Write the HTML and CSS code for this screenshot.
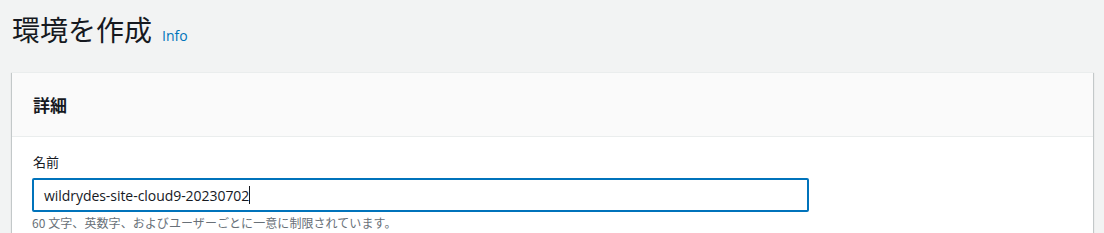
FILE: index.html
```html
<!DOCTYPE html>
<html lang="ja">
<head>
<meta charset="utf-8">
<link rel="stylesheet" href="styles.css">
</head>
<body>
<div class="page">
  <div class="title-row">
    <h1 class="title">環境を作成</h1>
    <a class="info">Info</a>
  </div>
  <div class="card">
    <div class="card-header">
      <h2 class="card-title">詳細</h2>
    </div>
    <div class="card-body">
      <label class="label">名前</label>
      <div class="input">wildrydes-site-cloud9-20230702<span class="caret"></span></div>
      <div class="hint">60 文字、英数字、およびユーザーごとに一意に制限されています。</div>
    </div>
  </div>
</div>
</body>
</html>
```

FILE: styles.css
```css
html, body {
  margin: 0;
  padding: 0;
  background: #f2f3f3;
  font-family: "Noto Sans", "Noto Sans CJK JP", sans-serif;
  color: #16191f;
  overflow: hidden;
}
.page {
  padding: 11px 10px 0 12px;
}
.title-row {
  display: flex;
  align-items: baseline;
  gap: 10px;
  height: 49px;
}
.title {
  margin: 0;
  font-family: "Noto Sans CJK JP", sans-serif;
  font-size: 28px;
  font-weight: 400;
  line-height: 36px;
}
.info {
  font-family: "Open Sans", "Noto Sans", sans-serif;
  font-size: 14px;
  color: #0073bb;
}
.card {
  margin-top: 12px;
  width: 1081px;
  background: #ffffff;
  border-top: 1px solid #eaeded;
  box-shadow: 0 1px 1px 0 rgba(0, 28, 36, 0.3), 1px 1px 1px 0 rgba(0, 28, 36, 0.15), -1px 1px 1px 0 rgba(0, 28, 36, 0.15);
}
.card-header {
  background: #fafafa;
  border-bottom: 1px solid #eaeded;
  height: 63px;
  display: flex;
  align-items: center;
  padding-left: 21px;
}
.card-title {
  margin: 0;
  font-family: "Noto Sans CJK JP", sans-serif;
  font-size: 17px;
  font-weight: 700;
}
.card-body {
  padding: 14px 20px 10px 20px;
}
.label {
  display: block;
  font-family: "Noto Sans CJK JP", sans-serif;
  font-size: 13px;
  line-height: 22px;
  margin-bottom: 5px;
  padding-left: 1px;
}
.input {
  box-sizing: border-box;
  width: 777px;
  height: 34px;
  border: 2px solid #0073bb;
  border-radius: 2px;
  padding: 0 10px;
  display: flex;
  align-items: center;
  font-family: "Open Sans", "Noto Sans", sans-serif;
  font-size: 14px;
  letter-spacing: -0.05px;
  color: #16191f;
}
.caret {
  display: inline-block;
  width: 1px;
  height: 18px;
  background: #16191f;
}
.hint {
  margin-top: 3px;
  font-family: "Noto Sans CJK JP", sans-serif;
  font-size: 12px;
  letter-spacing: 0.07px;
  color: #687078;
  line-height: 16px;
}
```
